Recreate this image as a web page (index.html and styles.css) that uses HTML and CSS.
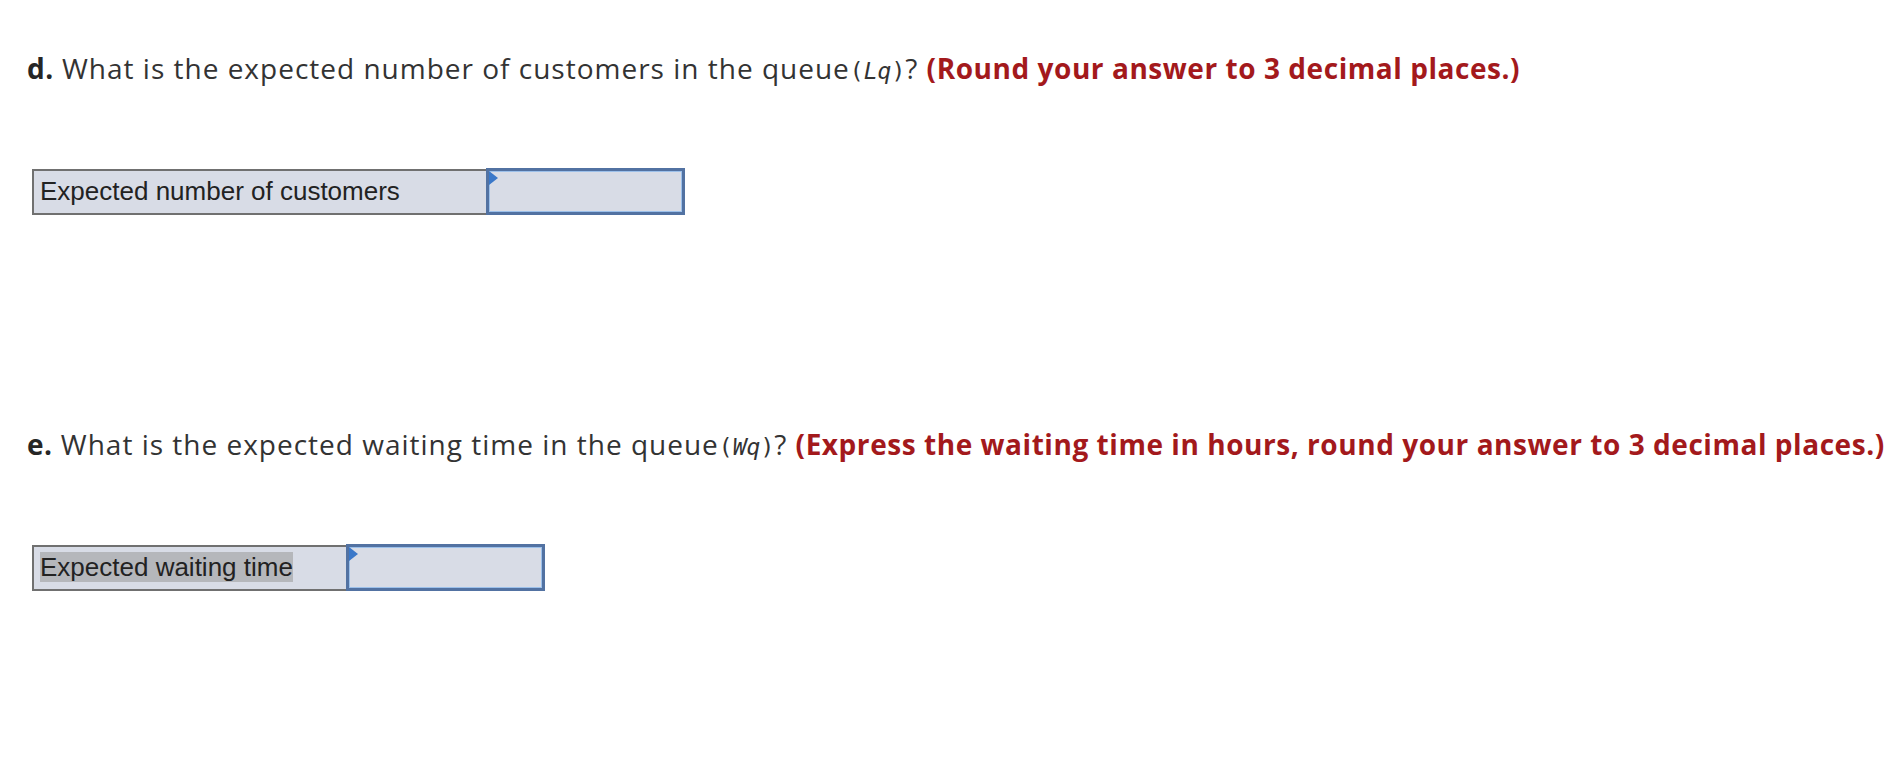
FILE: index.html
```html
<!DOCTYPE html>
<html>
<head>
<meta charset="utf-8">
<link rel="stylesheet" href="styles.css">
</head>
<body>
<div class="page">
  <section class="part part-d">
    <p class="question"><b class="letter">d.</b> What is the expected number of customers in the queue<span class="math">(<i>Lq</i>)</span>? <strong class="hint">(Round your answer to 3 decimal places.)</strong></p>
    <table class="answer answer-d">
      <tr>
        <td class="label label-d">Expected number of customers</td>
        <td class="input"><span class="flag"></span></td>
      </tr>
    </table>
  </section>
  <section class="part part-e">
    <p class="question"><b class="letter">e.</b> What is the expected waiting time in the queue<span class="math">(<i>Wq</i>)</span>? <strong class="hint">(Express the waiting time in hours, round your answer to 3 decimal places.)</strong></p>
    <table class="answer answer-e">
      <tr>
        <td class="label label-e"><span class="selected">Expected waiting time</span></td>
        <td class="input"><span class="flag"></span></td>
      </tr>
    </table>
  </section>
</div>
</body>
</html>
```
FILE: styles.css
```css
html, body {
  margin: 0;
  padding: 0;
  background: #ffffff;
}
.page {
  padding: 43px 0 0 27px;
}
.question {
  margin: 0;
  font-family: "Open Sans", Lato, sans-serif;
  font-size: 28px;
  letter-spacing: 1px;
  line-height: 50px;
  color: #333333;
  white-space: nowrap;
}
.letter {
  font-weight: 700;
  letter-spacing: 0.5px;
  color: #262626;
}
.math {
  font-family: "DejaVu Sans Mono", monospace;
  font-size: 23px;
  letter-spacing: 0;
  color: #333;
}
.math i {
  font-style: italic;
}
.hint {
  font-weight: 700;
  letter-spacing: 0.55px;
  color: #a3191c;
}
.answer {
  border-collapse: collapse;
  margin-left: 5px;
  font-family: "Liberation Sans", Arial, sans-serif;
  font-size: 26px;
  color: #222;
}
.answer-d {
  margin-top: 72px;
}
.part-e {
  margin-top: 204px;
}
.answer-e {
  margin-top: 72px;
}
.label {
  height: 42px;
  padding: 0 6px;
  background: #d8dce6;
  border: 2px solid #707070;
  vertical-align: middle;
}
.label-d { width: 440px; }
.label-e { width: 300px; }
.selected {
  background: #b5b7bb;
}
.input {
  position: relative;
  width: 193px;
  padding: 0;
  background: #d8dce6;
  border: 3px solid #5272a2;
  box-shadow: inset 0 0 0 1px #9cc0ea;
}
.flag {
  position: absolute;
  left: 0;
  top: 0;
  width: 0;
  height: 0;
  border-top: 7px solid transparent;
  border-bottom: 7px solid transparent;
  border-left: 9px solid #3a78c9;
}
```
